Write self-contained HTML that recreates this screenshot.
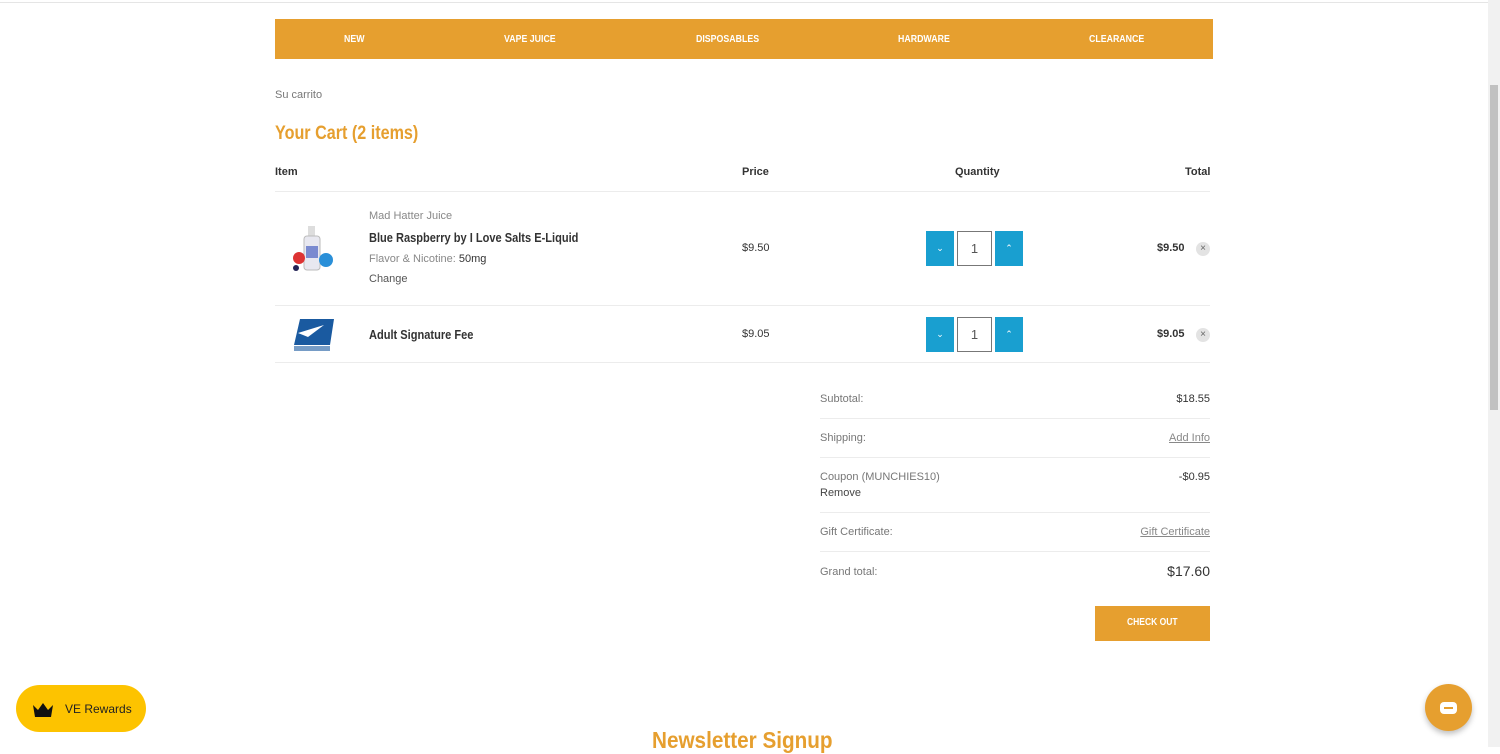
<!DOCTYPE html>
<html><head><meta charset="utf-8"><style>
*{margin:0;padding:0;box-sizing:border-box}
body{width:1500px;height:747px;overflow:hidden;background:#fff;font-family:"Liberation Sans",sans-serif;color:#333;position:relative}
.a{position:absolute}
.nar{transform:scaleX(.85);transform-origin:left center;white-space:nowrap}
.nav{left:275px;top:19px;width:938px;height:40px;background:#e69f2f}
.nav span{position:absolute;top:15px;color:#fff;font-size:10px;font-weight:bold;transform:scaleX(.88);transform-origin:left center}
.hr{height:1px;background:#ececec}
.qb{width:28px;height:35px;background:#199fd0;color:#fff;font-size:9px;text-align:center;line-height:35px}
.qi{width:35px;height:35px;border:1px solid #777;text-align:center;line-height:33px;font-size:13px;color:#555}
.x{width:14px;height:14px;border-radius:50%;background:#e3e3e3;font-size:10px;text-align:center;line-height:14px;color:#666}
.lbl{font-size:11px;color:#777}
.r{font-size:11px;text-align:right;width:200px}
</style></head><body>
<div class="a" style="left:0;top:2px;width:1488px;height:1px;background:#e5e5e5"></div>
<div class="a" style="left:1488px;top:0;width:12px;height:747px;background:#f1f1f1"></div>
<div class="a" style="left:1490px;top:85px;width:8px;height:325px;background:#c1c1c1"></div>
<div class="a nav"><span style="left:69px">NEW</span><span style="left:229px">VAPE JUICE</span><span style="left:421px">DISPOSABLES</span><span style="left:623px">HARDWARE</span><span style="left:814px">CLEARANCE</span></div>
<div class="a" style="left:275px;top:89px;font-size:11px;color:#777">Su carrito</div>
<div class="a nar" style="left:275px;top:123px;font-size:19px;font-weight:bold;color:#e69f2f">Your Cart (2 items)</div>
<div class="a" style="left:275px;top:166px;font-size:11px;font-weight:bold">Item</div>
<div class="a" style="left:742px;top:166px;font-size:11px;font-weight:bold">Price</div>
<div class="a" style="left:955px;top:166px;font-size:11px;font-weight:bold">Quantity</div>
<div class="a" style="left:1185px;top:166px;font-size:11px;font-weight:bold">Total</div>
<div class="a hr" style="left:275px;top:191px;width:935px"></div>
<svg class="a" style="left:290px;top:224px" width="48" height="52"><rect x="18" y="2" width="7" height="10" fill="#ddd"/><rect x="14" y="12" width="16" height="34" rx="3" fill="#e8e8f0" stroke="#bbb"/><rect x="16" y="22" width="12" height="12" fill="#7a8ad0"/><circle cx="9" cy="34" r="6" fill="#d33"/><circle cx="36" cy="36" r="7" fill="#2a8fd8"/><circle cx="6" cy="44" r="3" fill="#225"/></svg>
<div class="a" style="left:369px;top:210px;font-size:11px;color:#888">Mad Hatter Juice</div>
<div class="a nar" style="left:369px;top:230px;font-size:13px;font-weight:bold">Blue Raspberry by I Love Salts E-Liquid</div>
<div class="a" style="left:369px;top:253px;font-size:11px;color:#888">Flavor &amp; Nicotine: <span style="color:#333">50mg</span></div>
<div class="a" style="left:369px;top:273px;font-size:11px;color:#555">Change</div>
<div class="a" style="left:742px;top:242px;font-size:11px">$9.50</div>
<div class="a qb" style="left:926px;top:231px">&#8964;</div><div class="a qi" style="left:957px;top:231px">1</div><div class="a qb" style="left:995px;top:231px">&#8963;</div>
<div class="a" style="left:1157px;top:242px;font-size:11px;font-weight:bold">$9.50</div>
<div class="a x" style="left:1196px;top:242px">×</div>
<div class="a hr" style="left:275px;top:305px;width:935px"></div>
<svg class="a" style="left:294px;top:319px" width="42" height="34"><polygon points="6,0 40,0 36,26 0,26" fill="#1a5aa0"/><path d="M4,14 L30,6 L14,18 Z" fill="#fff"/><rect x="0" y="27" width="36" height="5" fill="#1a5aa0" opacity=".6"/></svg>
<div class="a nar" style="left:369px;top:327px;font-size:13px;font-weight:bold">Adult Signature Fee</div>
<div class="a" style="left:742px;top:328px;font-size:11px">$9.05</div>
<div class="a qb" style="left:926px;top:317px">&#8964;</div><div class="a qi" style="left:957px;top:317px">1</div><div class="a qb" style="left:995px;top:317px">&#8963;</div>
<div class="a" style="left:1157px;top:328px;font-size:11px;font-weight:bold">$9.05</div>
<div class="a x" style="left:1196px;top:328px">×</div>
<div class="a hr" style="left:275px;top:362px;width:935px"></div>
<div class="a lbl" style="left:820px;top:393px">Subtotal:</div><div class="a r" style="left:1010px;top:393px">$18.55</div>
<div class="a hr" style="left:820px;top:418px;width:390px"></div>
<div class="a lbl" style="left:820px;top:432px">Shipping:</div><div class="a r" style="left:1010px;top:432px;color:#888;text-decoration:underline">Add Info</div>
<div class="a hr" style="left:820px;top:457px;width:390px"></div>
<div class="a lbl" style="left:820px;top:471px">Coupon (MUNCHIES10)</div><div class="a r" style="left:1010px;top:471px">-$0.95</div>
<div class="a" style="left:820px;top:487px;font-size:11px;color:#444">Remove</div>
<div class="a hr" style="left:820px;top:512px;width:390px"></div>
<div class="a lbl" style="left:820px;top:526px">Gift Certificate:</div><div class="a r" style="left:1010px;top:526px;color:#888;text-decoration:underline">Gift Certificate</div>
<div class="a hr" style="left:820px;top:551px;width:390px"></div>
<div class="a lbl" style="left:820px;top:566px">Grand total:</div><div class="a r" style="left:1010px;top:563px;font-size:14px">$17.60</div>
<div class="a" style="left:1095px;top:606px;width:115px;height:35px;background:#e69f2f"></div>
<div class="a nar" style="left:1127px;top:617px;font-size:10px;font-weight:bold;color:#fff">CHECK OUT</div>
<div class="a" style="left:16px;top:685px;width:130px;height:47px;border-radius:24px;background:#fdc300"></div>
<svg class="a" style="left:32px;top:702px" width="22" height="15"><path d="M1,3 L6,8 L11,1 L16,8 L21,3 L19,15 L3,15 Z" fill="#111"/></svg>
<div class="a" style="left:65px;top:702px;font-size:12px;color:#222">VE Rewards</div>
<div class="a" style="left:1425px;top:684px;width:47px;height:47px;border-radius:50%;background:#e69f2f;box-shadow:0 3px 6px rgba(0,0,0,.25)"></div>
<div class="a" style="left:1440px;top:702px;width:17px;height:12px;border-radius:4px;background:#fff"></div>
<div class="a" style="left:1444px;top:707px;width:9px;height:2px;background:#e69f2f"></div>
<div class="a nar" style="left:652px;top:727px;font-size:23px;font-weight:bold;color:#e69f2f;transform:scaleX(.9)">Newsletter Signup</div>
</body></html>
